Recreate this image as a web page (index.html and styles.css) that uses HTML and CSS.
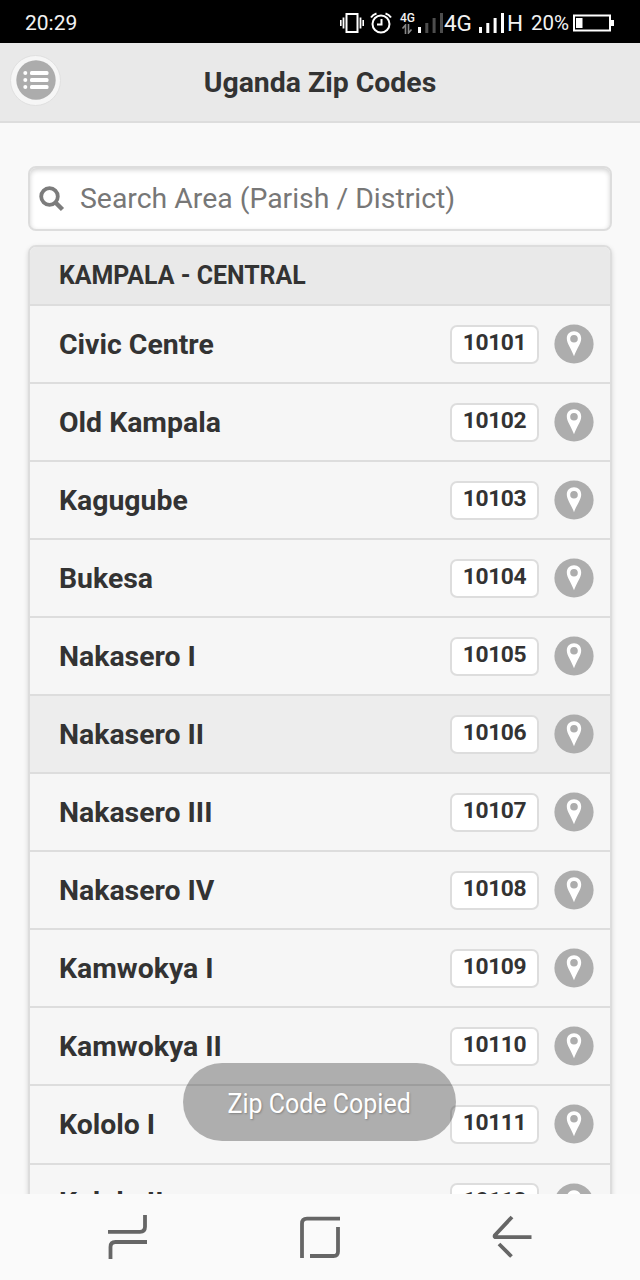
FILE: index.html
```html
<!DOCTYPE html>
<html lang="en">

<head>
    <meta charset="UTF-8">
    <meta name="viewport" content="width=device-width, initial-scale=1.0">
    <title>Uganda Zip Codes</title>
    <link rel="stylesheet" href="styles.css">
</head>

<body>

    <!-- Shared icons -->
    <svg class="sprite">
        <symbol id="pin" viewBox="0 0 40 40">
            <circle cx="20" cy="20" r="19.6" fill="#adadad" />
            <path d="M20 7.2c-4.200 0-7.200 3.100-7.200 7.200 0 5 4.700 10.600 7.200 17.800 2.500-7.200 7.200-12.800 7.200-17.800 0-4.100-3-7.200-7.200-7.200zm0 3.700a3.800 3.800 0 1 1 0 7.600 3.800 3.800 0 0 1 0-7.600z" fill="#fff" />
        </symbol>
    </svg>

    <div class="screen">
        <!-- Status bar -->
        <div class="status-bar">
            <span class="time">20:29</span>
            <div class="status-icons">
                <svg class="vibrate" width="26" height="24" viewBox="0 0 26 24" fill="none" stroke="#fff">
                    <rect x="7.500" y="3" width="11" height="18" stroke-width="2" />
                    <path d="M4.500 6.500v11M21.500 6.500v11" stroke-width="1.800" />
                    <path d="M1.800 9v6M24.200 9v6" stroke-width="1.600" />
                </svg>
                <svg class="alarm" width="22" height="24" viewBox="0 0 22 24" fill="none" stroke="#fff" stroke-width="2">
                    <circle cx="11" cy="13" r="8.500" />
                    <path d="M11.500 8v5.500H7M1 6.500Q3 3.500 6.500 2.500M21 6.500Q19 3.500 15.500 2.500" />
                </svg>
                <div class="data">
                    <span>4G</span>
                    <svg width="12" height="10" viewBox="0 0 12 10" fill="none" stroke="#888" stroke-width="1.600">
                        <path d="M4.500 10V1L1.500 4.500M7.500 0v9l3-3.500" />
                    </svg>
                </div>
                <svg class="signal" width="26" height="22" viewBox="0 0 26 22">
                    <path d="M0 15h3v6H0z" fill="#fff" />
                    <path d="M7.300 11h3v10h-3zM14.600 6h3v15h-3zM22 1h3v20h-3z" fill="#4d4d4d" />
                </svg>
                <span class="net">4G</span>
                <svg class="signal second" width="26" height="22" viewBox="0 0 26 22" fill="#fff">
                    <path d="M0 15h3v6H0zM7.300 11h3v10h-3zM14.600 6h3v15h-3zM22 1h3v20h-3z" />
                </svg>
                <span class="net">H</span>
                <span class="percent">20%</span>
                <svg class="battery" width="42" height="18" viewBox="0 0 42 18">
                    <rect x="1" y="1.500" width="36" height="15" fill="none" stroke="#fff" stroke-width="2" />
                    <path d="M3 4h6.500v10H3zM38 6h3v6h-3z" fill="#fff" />
                </svg>
            </div>
        </div>

        <!-- Page header -->
        <div class="header">
            <button class="menu-btn">
                <svg width="40" height="40" viewBox="0 0 40 40">
                    <circle cx="20" cy="20" r="19.700" fill="#acacac" />
                    <g fill="#fff">
                        <circle cx="9.300" cy="13" r="2" />
                        <circle cx="9.300" cy="20" r="2" />
                        <circle cx="9.300" cy="27" r="2" />
                        <rect x="14" y="11" width="18.500" height="4" rx="1.500" />
                        <rect x="14" y="18" width="18.500" height="4" rx="1.500" />
                        <rect x="14" y="25" width="18.500" height="4" rx="1.500" />
                    </g>
                </svg>
            </button>
            <h1>Uganda Zip Codes</h1>
        </div>

        <div class="content">
            <!-- Search box -->
            <div class="search-box">
                <svg width="26" height="26" viewBox="0 0 26 26" fill="none" stroke="#7c7c7c">
                    <circle cx="10.500" cy="10.500" r="8.300" stroke-width="3.800" />
                    <path d="M16 16l7.500 7.500" stroke-width="4.500" />
                </svg>
                <input type="text" placeholder="Search Area (Parish / District)">
            </div>

            <!-- Zip code list -->
            <ul class="zip-list">
                <li class="divider">KAMPALA - CENTRAL</li>
                <li class="row"><span class="name">Civic Centre</span><span class="code">10101</span><svg class="pin"><use href="#pin" /></svg></li>
                <li class="row"><span class="name">Old Kampala</span><span class="code">10102</span><svg class="pin"><use href="#pin" /></svg></li>
                <li class="row"><span class="name">Kagugube</span><span class="code">10103</span><svg class="pin"><use href="#pin" /></svg></li>
                <li class="row"><span class="name">Bukesa</span><span class="code">10104</span><svg class="pin"><use href="#pin" /></svg></li>
                <li class="row"><span class="name">Nakasero I</span><span class="code">10105</span><svg class="pin"><use href="#pin" /></svg></li>
                <li class="row active"><span class="name">Nakasero II</span><span class="code">10106</span><svg class="pin"><use href="#pin" /></svg></li>
                <li class="row"><span class="name">Nakasero III</span><span class="code">10107</span><svg class="pin"><use href="#pin" /></svg></li>
                <li class="row"><span class="name">Nakasero IV</span><span class="code">10108</span><svg class="pin"><use href="#pin" /></svg></li>
                <li class="row"><span class="name">Kamwokya I</span><span class="code">10109</span><svg class="pin"><use href="#pin" /></svg></li>
                <li class="row"><span class="name">Kamwokya II</span><span class="code">10110</span><svg class="pin"><use href="#pin" /></svg></li>
                <li class="row"><span class="name">Kololo I</span><span class="code">10111</span><svg class="pin"><use href="#pin" /></svg></li>
                <li class="row"><span class="name">Kololo II</span><span class="code">10112</span><svg class="pin"><use href="#pin" /></svg></li>
            </ul>
        </div>

        <!-- Navigation bar -->
        <div class="nav-bar">
            <svg width="44" height="46" viewBox="0 0 44 46">
                <path d="M3 17.800h32q5 0 5-5V1M5.500 45V33q0-5 5-5H42" />
            </svg>
            <svg width="44" height="46" viewBox="0 0 44 46">
                <path d="M4 44V9.700q0-5 5-5h33M40 13v24.500q0 4.500-4.500 4.500H12" />
            </svg>
            <svg width="44" height="46" viewBox="0 0 44 46">
                <path d="M21 3L3.700 21.500q-.5 1.700 1.300 1.700H40.500M8 30l12.500 12.500" />
            </svg>
        </div>
    </div>

    <div class="toast"><span>Zip Code Copied</span></div>

</body>

</html>
```
FILE: styles.css
```css
* {
    margin: 0;
    padding: 0;
    box-sizing: border-box;
}

body {
    font-family: Roboto, sans-serif;
    background: #f9f9f9;
    color: #333;
}

.sprite {
    display: none;
}

.screen {
    display: flex;
    flex-direction: column;
    height: 1280px;
    overflow: hidden;
}

/* Status bar */
.status-bar {
    display: flex;
    flex: none;
    justify-content: space-between;
    align-items: center;
    height: 43px;
    padding: 2px 25px 0;
    background: #000;
    color: #f2f2f2;
    font-size: 21px;
}

.status-icons {
    display: flex;
    align-items: center;
}

.alarm {
    margin-left: 5px;
}

.data {
    display: flex;
    flex-direction: column;
    align-items: center;
    margin: 0 3px 0 8px;
    font-size: 12px;
    font-weight: 500;
    line-height: 12px;
}

.net {
    font-size: 22.5px;
}

.second {
    margin-left: 7px;
    margin-right: 2px;
}

.percent {
    margin: 0 4px 0 8px;
    font-size: 20.5px;
}

/* Header */
.header {
    display: flex;
    flex: none;
    align-items: center;
    height: 80px;
    padding: 0 10px;
    background: #e9e9e9;
    border-bottom: 2px solid #ddd;
}

.menu-btn {
    display: flex;
    justify-content: center;
    align-items: center;
    width: 51px;
    height: 51px;
    margin-top: -4px;
    background: #f6f6f6;
    border: 1px solid #e0e0e0;
    border-radius: 50%;
}

.header h1 {
    flex: 1;
    padding-right: 51px;
    font-size: 28.4px;
    font-weight: 700;
    text-align: center;
}

/* Content */
.content {
    flex: 1;
    min-height: 0;
    padding: 43px 28px 0;
    overflow: hidden;
}

/* Search box */
.search-box {
    display: flex;
    align-items: center;
    height: 65px;
    margin-bottom: 14px;
    padding-left: 9px;
    background: #fff;
    border: 2px solid #ddd;
    border-radius: 8px;
    box-shadow: inset 0 2px 5px rgba(0, 0, 0, 0.18);
}

.search-box input {
    flex: 1;
    padding-left: 15px;
    background: none;
    border: none;
    outline: none;
    font-family: inherit;
    font-size: 28.4px;
}

.search-box input::placeholder {
    color: #777;
}

/* Zip code list */
.zip-list {
    list-style: none;
    border: 2px solid #ddd;
    border-radius: 8px;
    box-shadow: 0 2px 5px rgba(0, 0, 0, 0.15);
    overflow: hidden;
}

.divider {
    display: flex;
    align-items: center;
    height: 59px;
    padding-left: 29px;
    background: #e9e9e9;
    border-bottom: 2px solid #ddd;
    font-size: 24.9px;
    font-weight: 700;
}

.row {
    display: flex;
    align-items: center;
    height: 78.05px;
    padding: 0 16px 0 29px;
    background: #f6f6f6;
    border-bottom: 2px solid #ddd;
}

.row.active {
    background: #ededed;
}

.name {
    flex: 1;
    font-size: 28.4px;
    font-weight: 700;
}

.code {
    width: 89px;
    height: 39px;
    background: #fff;
    border: 2px solid #ddd;
    border-radius: 7px;
    font-size: 22.8px;
    font-weight: 700;
    letter-spacing: -0.4px;
    line-height: 32px;
    text-align: center;
}

.pin {
    width: 40px;
    height: 40px;
    margin-left: 15px;
}

/* Navigation bar */
.nav-bar {
    display: flex;
    flex: none;
    justify-content: space-between;
    align-items: center;
    height: 86px;
    padding: 0 105px;
    background: #fafafa;
}

.nav-bar path {
    fill: none;
    stroke: #666;
    stroke-width: 3.8;
}

/* Toast */
.toast {
    position: absolute;
    left: 183px;
    top: 1063px;
    display: flex;
    justify-content: center;
    align-items: center;
    width: 273px;
    height: 78px;
    padding-top: 2px;
    background: rgba(0, 0, 0, 0.29);
    border-radius: 39px;
    color: #fff;
    font-size: 28.4px;
    white-space: nowrap;
}

.toast span {
    transform: scaleX(0.88);
    text-shadow: 1px 1px 2px rgba(0, 0, 0, 0.25);
}
```
